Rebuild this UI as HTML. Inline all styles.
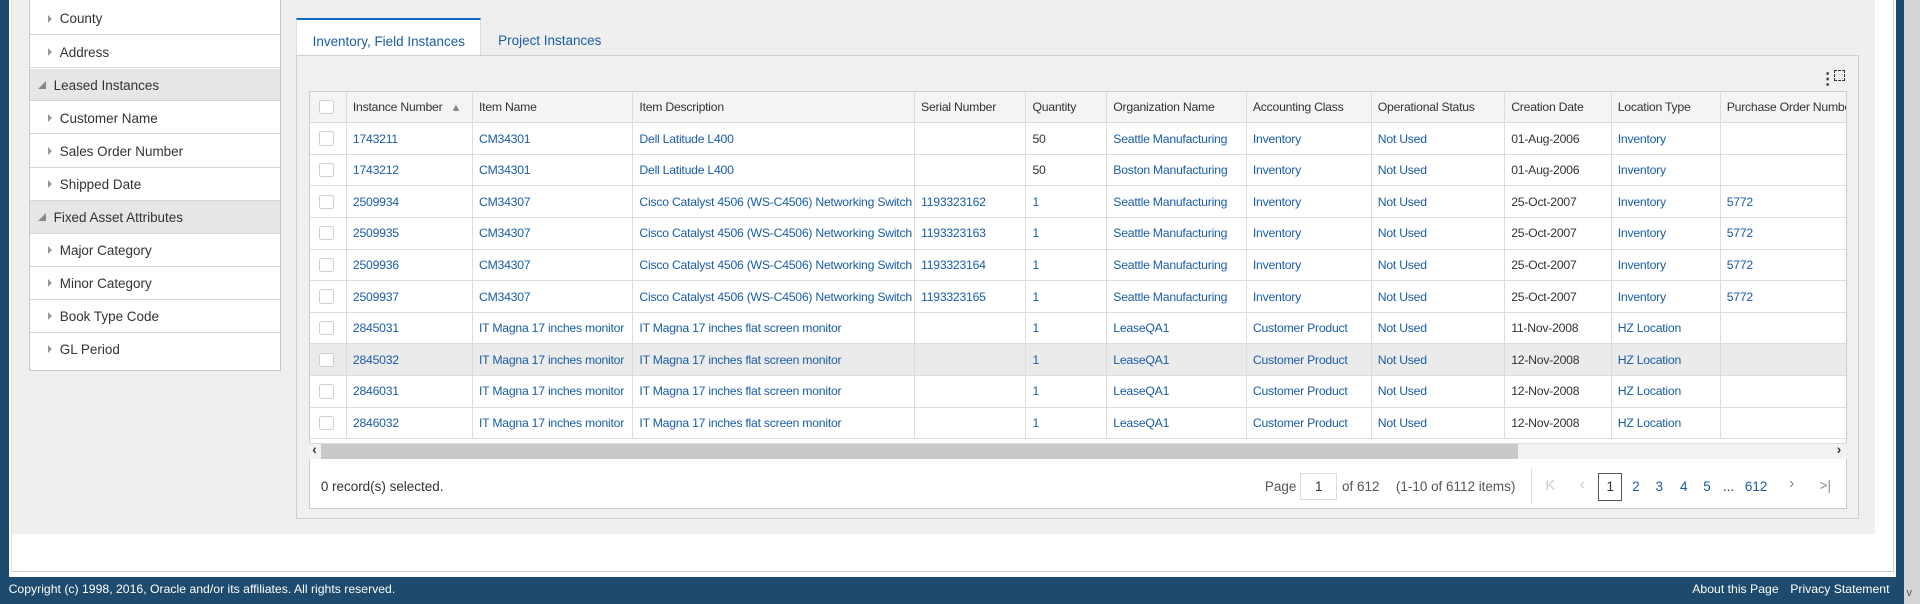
<!DOCTYPE html>
<html><head><meta charset="utf-8"><style>
html,body{margin:0;padding:0;}
body{width:1920px;height:603px;overflow:hidden;background:#fff;font-family:"Liberation Sans",Arial,sans-serif;}
#w{zoom:1.2245;width:1568px;height:493px;position:relative;overflow:hidden;background:#fff;}
.a{position:absolute;}
.lstrip{left:0;top:0;width:7px;height:493px;background:#1d4a6c;}
.rstrip{left:1548px;top:0;width:7px;height:493px;background:#1d4a6c;}
.sb{left:1555px;top:0;width:13px;height:493px;background:#d4d4d4;}
.main{left:10px;top:0;width:1521px;height:436px;background:#efefef;}
.frame{left:9px;top:0;width:1536px;height:466px;border-right:1px solid #ccc;border-left:1px solid #ddd;border-bottom:1px solid #ccc;}
.lp{left:24px;top:0;width:204px;height:302px;border:1px solid #c8c8c8;border-top:none;background:#fff;}
.row{position:absolute;left:0;width:204px;height:26px;border-bottom:1px solid #d6d6d6;font-size:11px;color:#333;line-height:27px;}
.row .t{position:absolute;left:14px;top:10px;width:0;height:0;border-left:4px solid #999;border-top:4px solid transparent;border-bottom:4px solid transparent;}
.row span{position:absolute;left:24px;}
.grp{background:#e6e6e6;}
.grp .t{left:6px;top:10px;border:none;width:0;height:0;border-right:0;border-bottom:7px solid #888;border-left:7px solid transparent;}
.grp span{left:19px;}
.tab1{left:242px;top:15px;width:151px;height:30px;background:#fff;border-top:2px solid #0a6bc4;border-left:1px solid #ddd;border-right:1px solid #ddd;box-sizing:border-box;font-size:11px;color:#1a5da6;text-align:center;line-height:36px;}
.tab2{left:394px;top:15px;width:110px;height:30px;font-size:11px;color:#1a5da6;text-align:center;line-height:38px;}
.panel{left:242px;top:45px;width:1276px;height:379px;border:1px solid #d0d0d0;box-sizing:border-box;background:#f0f0f0;}
.tbl{left:252px;top:74px;width:1256px;height:342px;background:#fff;border:1px solid #ccc;box-sizing:border-box;overflow:hidden;}
table{border-collapse:collapse;font-size:10px;letter-spacing:-0.2px;table-layout:fixed;position:absolute;left:0;top:0;width:1262px;}
td{height:25px;border-right:1px solid #dcdcdc;border-bottom:1px solid #dcdcdc;padding:0 0 0 5px;white-space:nowrap;overflow:hidden;color:#1a5da6;}
tr.h td{background:#f4f4f4;color:#333;height:25px;}
tr.sel td{background:#ebebeb;}
td.c{padding:0;}
.cb{width:10px;height:10px;border:1px solid #cfcfcf;border-radius:2px;margin-left:8px;background:#fff;}
td.k{color:#333;}
.hs{left:252px;top:362px;width:1256px;height:13px;background:#f2f2f2;border-top:1px solid #ddd;}
.thumb{left:262px;top:363px;width:978px;height:12px;background:#c9c9c9;}
.ft{left:252px;top:375px;width:1256px;height:41px;background:#fff;border:1px solid #ccc;border-top:none;box-sizing:border-box;}
.txt{font-size:11px;color:#333;}
.pg{font-size:11px;color:#1a5da6;}
.foot{left:0;top:471px;width:1555px;height:22px;background:#1e4a6e;color:#fff;font-size:10px;line-height:21px;}
</style></head><body><div id="w">
<div class="a main"></div>
<div class="a frame"></div>
<div class="a lstrip"></div>
<div class="a rstrip"></div>
<div class="a sb"></div>
<div class="a" style="left:1557px;top:479px;font-size:9px;color:#555">v</div>

<div class="a lp">
<div class="row" style="top:2px"><i class="t"></i><span>County</span></div>
<div class="row" style="top:29px"><i class="t"></i><span>Address</span></div>
<div class="row grp" style="top:56px"><i class="t"></i><span>Leased Instances</span></div>
<div class="row" style="top:83px"><i class="t"></i><span>Customer Name</span></div>
<div class="row" style="top:110px"><i class="t"></i><span>Sales Order Number</span></div>
<div class="row" style="top:137px"><i class="t"></i><span>Shipped Date</span></div>
<div class="row grp" style="top:164px"><i class="t"></i><span>Fixed Asset Attributes</span></div>
<div class="row" style="top:191px"><i class="t"></i><span>Major Category</span></div>
<div class="row" style="top:218px"><i class="t"></i><span>Minor Category</span></div>
<div class="row" style="top:245px"><i class="t"></i><span>Book Type Code</span></div>
<div class="row" style="top:272px;border-bottom:none"><i class="t"></i><span>GL Period</span></div>
</div>

<div class="a panel"></div>
<div class="a tab1">Inventory, Field Instances</div>
<div class="a tab2">Project Instances</div>
<div class="a" style="left:1486px;top:56px;font-size:13px;color:#333;font-weight:bold">&#8942;</div>
<div class="a" style="left:1498px;top:57px;width:9px;height:9px;border:1px dashed #333;box-sizing:border-box"></div>

<div class="a tbl">
<table>
<colgroup><col style="width:30px"><col style="width:103px"><col style="width:131px"><col style="width:230px"><col style="width:91px"><col style="width:66px"><col style="width:114px"><col style="width:102px"><col style="width:109px"><col style="width:87px"><col style="width:89px"><col style="width:110px"></colgroup>
<tr class="h"><td class="c"><div class="cb"></div></td><td>Instance Number <span style="color:#888;font-size:9px;margin-left:4px">&#9650;</span></td><td>Item Name</td><td>Item Description</td><td>Serial Number</td><td>Quantity</td><td>Organization Name</td><td>Accounting Class</td><td>Operational Status</td><td>Creation Date</td><td>Location Type</td><td>Purchase Order Number</td></tr>
<tr><td class="c"><div class="cb"></div></td><td>1743211</td><td>CM34301</td><td>Dell Latitude L400</td><td></td><td class="k">50</td><td>Seattle Manufacturing</td><td>Inventory</td><td>Not Used</td><td class="k">01-Aug-2006</td><td>Inventory</td><td></td></tr>
<tr><td class="c"><div class="cb"></div></td><td>1743212</td><td>CM34301</td><td>Dell Latitude L400</td><td></td><td class="k">50</td><td>Boston Manufacturing</td><td>Inventory</td><td>Not Used</td><td class="k">01-Aug-2006</td><td>Inventory</td><td></td></tr>
<tr><td class="c"><div class="cb"></div></td><td>2509934</td><td>CM34307</td><td>Cisco Catalyst 4506 (WS-C4506) Networking Switch</td><td>1193323162</td><td>1</td><td>Seattle Manufacturing</td><td>Inventory</td><td>Not Used</td><td class="k">25-Oct-2007</td><td>Inventory</td><td>5772</td></tr>
<tr><td class="c"><div class="cb"></div></td><td>2509935</td><td>CM34307</td><td>Cisco Catalyst 4506 (WS-C4506) Networking Switch</td><td>1193323163</td><td>1</td><td>Seattle Manufacturing</td><td>Inventory</td><td>Not Used</td><td class="k">25-Oct-2007</td><td>Inventory</td><td>5772</td></tr>
<tr><td class="c"><div class="cb"></div></td><td>2509936</td><td>CM34307</td><td>Cisco Catalyst 4506 (WS-C4506) Networking Switch</td><td>1193323164</td><td>1</td><td>Seattle Manufacturing</td><td>Inventory</td><td>Not Used</td><td class="k">25-Oct-2007</td><td>Inventory</td><td>5772</td></tr>
<tr><td class="c"><div class="cb"></div></td><td>2509937</td><td>CM34307</td><td>Cisco Catalyst 4506 (WS-C4506) Networking Switch</td><td>1193323165</td><td>1</td><td>Seattle Manufacturing</td><td>Inventory</td><td>Not Used</td><td class="k">25-Oct-2007</td><td>Inventory</td><td>5772</td></tr>
<tr><td class="c"><div class="cb"></div></td><td>2845031</td><td>IT Magna 17 inches monitor</td><td>IT Magna 17 inches flat screen monitor</td><td></td><td>1</td><td>LeaseQA1</td><td>Customer Product</td><td>Not Used</td><td class="k">11-Nov-2008</td><td>HZ Location</td><td></td></tr>
<tr class="sel"><td class="c"><div class="cb"></div></td><td>2845032</td><td>IT Magna 17 inches monitor</td><td>IT Magna 17 inches flat screen monitor</td><td></td><td>1</td><td>LeaseQA1</td><td>Customer Product</td><td>Not Used</td><td class="k">12-Nov-2008</td><td>HZ Location</td><td></td></tr>
<tr><td class="c"><div class="cb"></div></td><td>2846031</td><td>IT Magna 17 inches monitor</td><td>IT Magna 17 inches flat screen monitor</td><td></td><td>1</td><td>LeaseQA1</td><td>Customer Product</td><td>Not Used</td><td class="k">12-Nov-2008</td><td>HZ Location</td><td></td></tr>
<tr><td class="c"><div class="cb"></div></td><td>2846032</td><td>IT Magna 17 inches monitor</td><td>IT Magna 17 inches flat screen monitor</td><td></td><td>1</td><td>LeaseQA1</td><td>Customer Product</td><td>Not Used</td><td class="k">12-Nov-2008</td><td>HZ Location</td><td></td></tr>
</table>
</div>
<div class="a hs"></div>
<div class="a thumb"></div>
<div class="a" style="left:255px;top:361px;font-size:11px;color:#333;font-weight:bold">&#8249;</div>
<div class="a" style="left:1500px;top:361px;font-size:11px;color:#333;font-weight:bold">&#8250;</div>
<div class="a ft"></div>
<div class="a txt" style="left:262px;top:391px">0 record(s) selected.</div>
<div class="a txt" style="left:1033px;top:391px;color:#555">Page</div>
<div class="a" style="left:1062px;top:386px;width:30px;height:22px;border:1px solid #ddd;box-sizing:border-box;font-size:11px;color:#333;text-align:center;line-height:21px">1</div>
<div class="a txt" style="left:1096px;top:391px;color:#555">of 612</div>
<div class="a txt" style="left:1140px;top:391px;color:#555">(1-10 of 6112 items)</div>
<div class="a" style="left:1250px;top:382px;width:1px;height:30px;background:#ddd"></div>
<div class="a" style="left:1262px;top:390px;font-size:12px;color:#ccc">K</div>
<div class="a" style="left:1290px;top:389px;font-size:13px;color:#ccc">&#8249;</div>
<div class="a" style="left:1305px;top:386px;width:20px;height:23px;border:1px solid #555;box-sizing:border-box;font-size:11px;color:#333;text-align:center;line-height:22px">1</div>
<div class="a pg" style="left:1333px;top:391px">2</div>
<div class="a pg" style="left:1352px;top:391px">3</div>
<div class="a pg" style="left:1372px;top:391px">4</div>
<div class="a pg" style="left:1391px;top:391px">5</div>
<div class="a txt" style="left:1407px;top:391px">...</div>
<div class="a pg" style="left:1425px;top:391px">612</div>
<div class="a" style="left:1461px;top:388px;font-size:13px;color:#888">&#8250;</div>
<div class="a" style="left:1486px;top:390px;font-size:11px;color:#888">&gt;|</div>

<div class="a foot"><span style="position:absolute;left:7px">Copyright (c) 1998, 2016, Oracle and/or its affiliates. All rights reserved.</span><span style="position:absolute;left:1382px">About this Page</span><span style="position:absolute;left:1462px">Privacy Statement</span></div>
</div></body></html>
